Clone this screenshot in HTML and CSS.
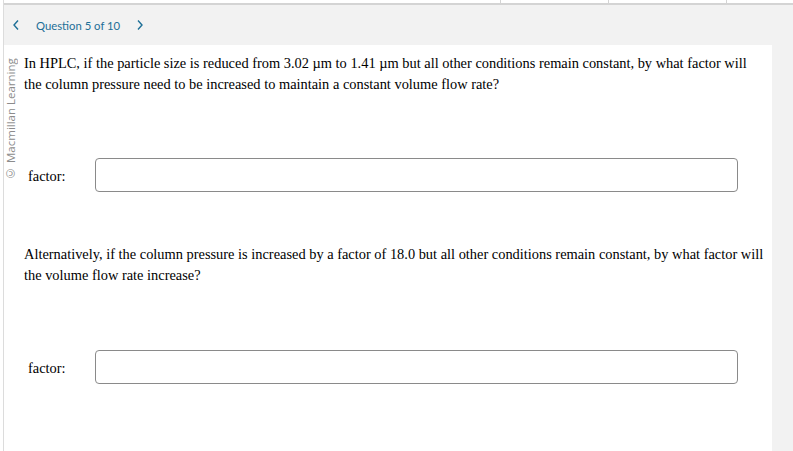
FILE: index.html
```html
<!DOCTYPE html>
<html>
<head>
<meta charset="utf-8">
<link rel="stylesheet" href="styles.css">
</head>
<body>
<div class="frame">
  <div class="tabs">
    <div class="tab tab-a"></div>
    <div class="tab tab-b"></div>
    <div class="tab tab-c"></div>
    <div class="tab tab-d"></div>
  </div>
  <div class="header">
    <span class="chev">
      <svg width="8" height="12" viewBox="0 0 8 12"><polyline points="6,1.5 2,6 6,10.5" fill="none" stroke="#1d6f97" stroke-width="1.4"/></svg>
    </span>
    <span class="qnum">Question 5 of 10</span>
    <span class="chev">
      <svg width="8" height="12" viewBox="0 0 8 12"><polyline points="2,1.5 6,6 2,10.5" fill="none" stroke="#1d6f97" stroke-width="1.4"/></svg>
    </span>
  </div>
  <div class="main">
    <div class="panel">
      <div class="side"><span class="copy">© Macmillan Learning</span></div>
      <div class="content">
        <p class="q q1">In HPLC, if the particle size is reduced from 3.02 µm to 1.41 µm but all other conditions remain constant, by what factor will the column pressure need to be increased to maintain a constant volume flow rate?</p>
        <div class="row row1">
          <label class="lbl">factor:</label>
          <input class="ans" type="text">
        </div>
        <p class="q q2">Alternatively, if the column pressure is increased by a factor of 18.0 but all other conditions remain constant, by what factor will the volume flow rate increase?</p>
        <div class="row row2">
          <label class="lbl">factor:</label>
          <input class="ans" type="text">
        </div>
      </div>
    </div>
    <div class="gutter"></div>
  </div>
</div>
</body>
</html>
```

FILE: styles.css
```css
html, body {
  margin: 0;
  padding: 0;
  background: #ffffff;
  height: 100%;
  overflow: hidden;
}
.frame {
  margin-left: 3px;
  border-left: 1px solid #dcdcdc;
  height: 100%;
  display: flex;
  flex-direction: column;
}
.tabs {
  display: flex;
  height: 3px;
  border-bottom: 2px solid #d4d4d4;
}
.tab-a { width: 496px; }
.tab { border-right: 1px solid #d4d4d4; }
.tab-b { width: 107px; }
.tab-c { width: 117px; }
.tab-d { flex: 1; border-right: none; }
.header {
  height: 40px;
  background: #f2f2f2;
  display: flex;
  align-items: center;
  font-family: Lato, "Open Sans", sans-serif;
  font-size: 11.3px;
  color: #1d6f97;
  padding-left: 8px;
}
.chev { display: flex; align-items: center; }
.qnum { margin-left: 16px; margin-right: 16px; }
.main {
  flex: 1;
  display: flex;
  background: #f2f2f2;
}
.panel {
  width: 768px;
  background: #ffffff;
  display: flex;
}
.gutter { flex: 1; }
.side {
  width: 14px;
  display: flex;
  justify-content: center;
  padding-top: 10px;
  padding-right: 6px;
}
.copy {
  writing-mode: vertical-rl;
  transform: rotate(180deg);
  font-family: "Open Sans", Lato, sans-serif;
  font-size: 11.5px;
  color: #8c8c8c;
  height: 126px;
  white-space: nowrap;
  line-height: 12px;
}
.content {
  flex: 1;
  padding-right: 7px;
  font-family: "Liberation Serif", "Times New Roman", serif;
  font-size: 14.4px;
  color: #000;
}
.q {
  margin: 0;
  line-height: 21px;
}
.q1 { margin-top: 8px; }
.row {
  display: flex;
  align-items: center;
}
.row1 { margin-top: 63px; }
.q2 { margin-top: 52px; }
.row2 { margin-top: 64px; }
.lbl {
  width: 67px;
  padding-left: 4px;
  padding-top: 3px;
}
.ans {
  width: 643px;
  height: 34px;
  box-sizing: border-box;
  border: 1px solid #8a8a8a;
  border-radius: 4px;
  margin: 0;
  padding: 0 6px;
  background: #fff;
}
```
